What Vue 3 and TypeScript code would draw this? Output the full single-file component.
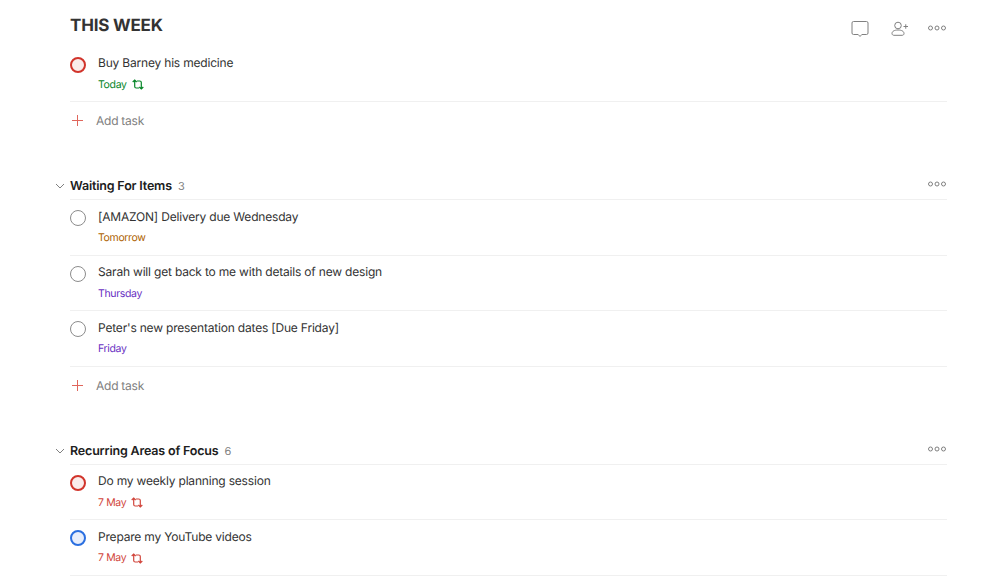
<script setup lang="ts">
interface Task {
  title: string;
  date: string;
  dateClass: string;
  ring: string;
  recurring?: boolean;
}

interface Section {
  name: string;
  count: number;
  tasks: Task[];
  addTask: boolean;
}

const topTasks: Task[] = [
  { title: 'Buy Barney his medicine', date: 'Today', dateClass: 'green', ring: 'ring-red', recurring: true },
];

const sections: Section[] = [
  {
    name: 'Waiting For Items',
    count: 3,
    addTask: true,
    tasks: [
      { title: '[AMAZON] Delivery due Wednesday', date: 'Tomorrow', dateClass: 'orange', ring: 'ring-grey' },
      { title: 'Sarah will get back to me with details of new design', date: 'Thursday', dateClass: 'purple', ring: 'ring-grey' },
      { title: "Peter's new presentation dates [Due Friday]", date: 'Friday', dateClass: 'purple', ring: 'ring-grey' },
    ],
  },
  {
    name: 'Recurring Areas of Focus',
    count: 6,
    addTask: false,
    tasks: [
      { title: 'Do my weekly planning session', date: '7 May', dateClass: 'red', ring: 'ring-red', recurring: true },
      { title: 'Prepare my YouTube videos', date: '7 May', dateClass: 'red', ring: 'ring-blue', recurring: true },
    ],
  },
];
</script>

<template>
  <div class="page">
    <header class="top">
      <h1>THIS WEEK</h1>
      <div class="actions">
        <svg width="18" height="18" viewBox="0 -1 18 18" class="icon comment">
          <path d="M2.500 1.500h13A1.500 1.500 0 0 1 17 3v10a1.500 1.500 0 0 1-1.500 1.500h-4.700L9 16.500l-1.800-2H2.500A1.500 1.500 0 0 1 1 13V3a1.500 1.500 0 0 1 1.500-1.500z" />
        </svg>
        <svg width="17" height="15" viewBox="0 -.5 17 15" class="icon">
          <circle cx="7" cy="4" r="3.300" />
          <path d="M1 12c0-2.300 2.500-3.500 6-3.500s6 1.200 6 3.500c0 1.300-1 1.800-2 1.800H3c-1 0-2-.5-2-1.800z" />
          <path d="M12.500 5h4.500M14.750 2.750v4.500" />
        </svg>
        <svg width="18" height="6" viewBox="0 0 18 6" class="icon">
          <circle cx="2.500" cy="3" r="2" /><circle cx="9" cy="3" r="2" /><circle cx="15.500" cy="3" r="2" />
        </svg>
      </div>
    </header>

    <ul class="tasks">
      <li v-for="task in topTasks" :key="task.title" class="task">
        <span class="ring" :class="task.ring"></span>
        <div class="body">
          <div class="title">{{ task.title }}</div>
          <div class="date" :class="task.dateClass">
            {{ task.date }}
            <svg v-if="task.recurring" width="12" height="11" viewBox="0 0 12 11" class="repeat">
              <path d="M.7 3 2.700 1 4.700 3M2.700 1.200V7.500c0 1 .5 1.500 1.500 1.500H7M11.300 8 9.300 10 7.300 8M9.300 9.800V3.500c0-1-.5-1.500-1.500-1.500H5" />
            </svg>
          </div>
        </div>
      </li>
    </ul>
    <div class="add">
      <svg width="13" height="13" viewBox="0 0 13 13" class="plus"><path d="M6.500 1v11M1 6.500h11" /></svg>
      <span>Add task</span>
    </div>

    <section v-for="section in sections" :key="section.name" class="section">
      <div class="section-head">
        <svg width="10" height="6" viewBox="0 0 10 6" class="chevron"><path d="M1 1l4 4 4-4" /></svg>
        <h2>{{ section.name }}</h2>
        <span class="count">{{ section.count }}</span>
        <svg width="18" height="6" viewBox="0 0 18 6" class="icon section-dots">
          <circle cx="2.500" cy="3" r="2" /><circle cx="9" cy="3" r="2" /><circle cx="15.500" cy="3" r="2" />
        </svg>
      </div>
      <ul class="tasks">
        <li v-for="task in section.tasks" :key="task.title" class="task">
          <span class="ring" :class="task.ring"></span>
          <div class="body">
            <div class="title">{{ task.title }}</div>
            <div class="date" :class="task.dateClass">
              {{ task.date }}
              <svg v-if="task.recurring" width="12" height="11" viewBox="0 0 12 11" class="repeat">
                <path d="M.7 3 2.700 1 4.700 3M2.700 1.200V7.500c0 1 .5 1.500 1.500 1.500H7M11.300 8 9.300 10 7.300 8M9.300 9.800V3.500c0-1-.5-1.500-1.500-1.500H5" />
              </svg>
            </div>
          </div>
        </li>
      </ul>
      <div v-if="section.addTask" class="add">
        <svg width="13" height="13" viewBox="0 0 13 13" class="plus"><path d="M6.500 1v11M1 6.500h11" /></svg>
        <span>Add task</span>
      </div>
    </section>
  </div>
</template>

<style>
html,
body {
  background: #fff;
  overflow: hidden;
}
</style>

<style scoped>
.page {
  height: 578px;
  overflow: hidden;
  padding: 0 53px 0 70px;
  font-family: Inter, 'Liberation Sans', sans-serif;
  text-rendering: geometricPrecision;
  color: #333;
}

.top {
  display: flex;
  justify-content: space-between;
  height: 46.500px;
}

h1 {
  margin: 15px 0 0;
  font-size: 17px;
  line-height: 22px;
  font-weight: 700;
  letter-spacing: -0.2px;
  color: #333;
}

.actions {
  display: flex;
  align-items: center;
  gap: 20px;
  height: 18px;
  margin: 19px 1px 0 0;
}

.comment {
  margin-right: 2px;
}

.icon {
  fill: none;
  stroke: #808080;
  stroke-width: 1;
}

ul {
  list-style: none;
  margin: 0;
  padding: 0;
}

.task {
  display: flex;
  height: 55.600px;
  border-bottom: 1px solid #f0f0f0;
  box-sizing: border-box;
}

.ring {
  flex: none;
  box-sizing: border-box;
  width: 16px;
  height: 16px;
  margin: 10px 12px 0 0;
  border-radius: 50%;
}

.ring-grey {
  border: 1.200px solid #8c8c8c;
}

.ring-red {
  border: 2px solid #d1342b;
  background: #faeceb;
}

.ring-blue {
  border: 2px solid #2a6fe0;
  background: #e8eefb;
}

.body {
  padding-top: 6.500px;
}

.title {
  font-size: 12px;
  line-height: 20px;
  letter-spacing: -0.19px;
  color: #333;
}

.date {
  display: flex;
  align-items: center;
  gap: 5px;
  margin-top: 3.500px;
  font-size: 10.500px;
  line-height: 16px;
  letter-spacing: -0.35px;
}

.green { color: #058527; }
.orange { color: #ad6200; }
.purple { color: #692fc2; }
.red { color: #d1453b; }

.repeat {
  fill: none;
  stroke: currentColor;
  stroke-width: 1.200;
}

.add {
  display: flex;
  align-items: center;
  gap: 12px;
  height: 37px;
  font-size: 12px;
  letter-spacing: -0.25px;
  color: #808080;
}

.plus {
  margin-left: 1px;
  fill: none;
  stroke: #e0665c;
  stroke-width: 1;
  shape-rendering: crispEdges;
}

.section {
  margin-top: 29px;
}

.section-head {
  position: relative;
  display: flex;
  align-items: baseline;
  height: 32px;
  padding-top: 9px;
  box-sizing: border-box;
  border-bottom: 1px solid #f0f0f0;
}

.chevron {
  position: absolute;
  left: -15px;
  top: 15px;
  fill: none;
  stroke: #808080;
  stroke-width: 1;
}

h2 {
  margin: 0;
  font-size: 12.500px;
  line-height: 20px;
  font-weight: 600;
  letter-spacing: -0.18px;
  color: #202020;
}

.count {
  margin-left: 6px;
  font-size: 11px;
  color: #808080;
}

.section-dots {
  position: absolute;
  right: 1px;
  top: 13px;
}
</style>
